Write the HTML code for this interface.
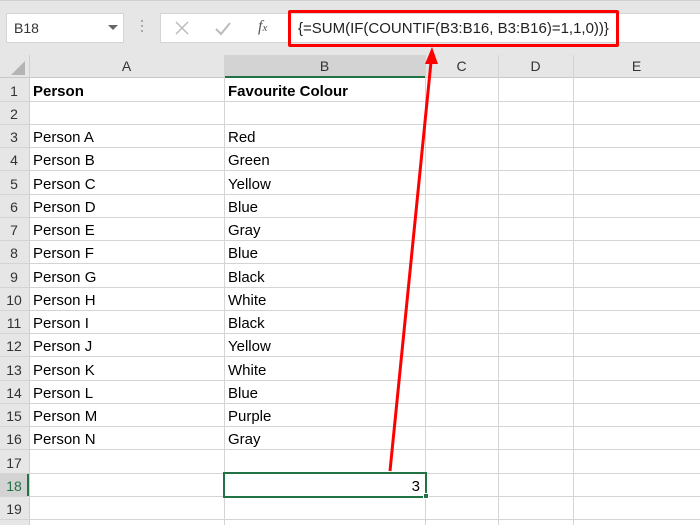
<!DOCTYPE html>
<html><head><style>
body{margin:0;width:700px;height:525px;background:#e6e6e6;position:relative;overflow:hidden;font-family:"Liberation Sans",sans-serif;}
.a{position:absolute;box-sizing:border-box;}
.t{font-size:15px;color:#000;line-height:23px;white-space:nowrap;}
</style></head><body>
<div class="a" style="left:0;top:0;width:700px;height:1px;background:#d0d0d0"></div>
<div class="a" style="left:6px;top:13px;width:118px;height:30px;background:#fff;border:1px solid #d4d4d4"></div>
<div class="a t" style="left:14px;top:17px;color:#333;font-size:14px">B18</div>
<div class="a" style="left:108px;top:25px;width:0;height:0;border-left:5px solid transparent;border-right:5px solid transparent;border-top:5px solid #666"></div>
<div class="a" style="left:141px;top:20px;width:2px;height:2px;background:#aaa;box-shadow:0 5px 0 #aaa,0 10px 0 #aaa"></div>
<div class="a" style="left:160px;top:13px;width:130px;height:30px;background:#fff;border:1px solid #d4d4d4"></div>
<svg class="a" style="left:174px;top:20px" width="16" height="16"><path d="M2 2L14 14M14 2L2 14" stroke="#bbb" stroke-width="1.5"/></svg>
<svg class="a" style="left:214px;top:20px" width="18" height="16"><path d="M2 9L7 14L16 3" stroke="#bbb" stroke-width="2" fill="none"/></svg>
<div class="a" style="left:258px;top:19px;font-family:'Liberation Serif',serif;font-style:italic;font-size:16px;color:#555;line-height:16px">f<span style="font-size:11px">x</span></div>
<div class="a" style="left:288px;top:13px;width:412px;height:30px;background:#fff;border-top:1px solid #d4d4d4;border-bottom:1px solid #d4d4d4"></div>
<div class="a" style="left:288px;top:10px;width:331px;height:37px;border:3px solid #f00;border-radius:2px"></div>
<div class="a t" style="left:298px;top:17px;color:#222">{=SUM(IF(COUNTIF(B3:B16, B3:B16)=1,1,0))}</div>

<div class="a" style="left:0;top:55px;width:700px;height:470px;background:#fff"></div>
<div class="a" style="left:0;top:55px;width:700px;height:23px;background:#e6e6e6;border-bottom:1px solid #c8c8c8"></div>
<div class="a" style="left:224px;top:55px;width:201px;height:23px;background:#d3d3d3;border-bottom:2px solid #217346"></div>
<svg class="a" style="left:10px;top:60px" width="16" height="16"><path d="M15 1L15 15L1 15Z" fill="#b4b4b4"/></svg>
<div class="a" style="left:29px;top:55px;width:1px;height:470px;background:#d0d0d0"></div>
<div class="a" style="left:224px;top:55px;width:1px;height:470px;background:#d4d4d4"></div>
<div class="a" style="left:425px;top:55px;width:1px;height:470px;background:#d4d4d4"></div>
<div class="a" style="left:498px;top:55px;width:1px;height:470px;background:#d4d4d4"></div>
<div class="a" style="left:573px;top:55px;width:1px;height:470px;background:#d4d4d4"></div>
<div class="a t" style="left:29px;top:58px;width:195px;text-align:center;color:#333;font-size:14px;line-height:16px">A</div>
<div class="a t" style="left:224px;top:58px;width:201px;text-align:center;color:#333;font-size:14px;line-height:16px">B</div>
<div class="a t" style="left:425px;top:58px;width:73px;text-align:center;color:#333;font-size:14px;line-height:16px">C</div>
<div class="a t" style="left:498px;top:58px;width:75px;text-align:center;color:#333;font-size:14px;line-height:16px">D</div>
<div class="a t" style="left:573px;top:58px;width:127px;text-align:center;color:#333;font-size:14px;line-height:16px">E</div>
<div class="a" style="left:0;top:78px;width:29px;height:447px;background:#e6e6e6"></div>
<div class="a" style="left:0;top:473px;width:29px;height:24px;background:#d3d3d3;border-right:2px solid #217346"></div>
<div id="rows"></div>
<script>
var A=["Person","","Person A","Person B","Person C","Person D","Person E","Person F","Person G","Person H","Person I","Person J","Person K","Person L","Person M","Person N","","",""];
var B=["Favourite Colour","","Red","Green","Yellow","Blue","Gray","Blue","Black","White","Black","Yellow","White","Blue","Purple","Gray","","",""];
var h="";
for(var i=0;i<19;i++){var y=78+i*23.25;var ty=y+1.5;
h+='<div class="a" style="left:0;top:'+(y+22.5)+'px;width:700px;height:1px;background:#d4d4d4"></div>';
h+='<div class="a t" style="left:0;top:'+ty+'px;width:28px;text-align:center;color:'+(i==17?'#217346':'#333')+';font-size:14px">'+(i+1)+'</div>';
var fw=i==0?'font-weight:bold;':'';
h+='<div class="a t" style="left:33px;top:'+ty+'px;'+fw+'">'+A[i]+'</div>';
h+='<div class="a t" style="left:228px;top:'+ty+'px;'+fw+'">'+B[i]+'</div>';}
document.getElementById('rows').innerHTML=h;
</script>
<div class="a" style="left:223px;top:472px;width:204px;height:26px;border:2px solid #217346"></div>
<div class="a" style="left:423px;top:493px;width:6px;height:6px;background:#217346;border:1px solid #fff"></div>
<div class="a t" style="left:300px;top:475px;width:120px;text-align:right">3</div>
<svg class="a" style="left:0;top:0" width="700" height="525"><path d="M390 471L431 62" stroke="#f00" stroke-width="3"/><path d="M432 47L425 64L438 64Z" fill="#f00"/></svg>
</body></html>
